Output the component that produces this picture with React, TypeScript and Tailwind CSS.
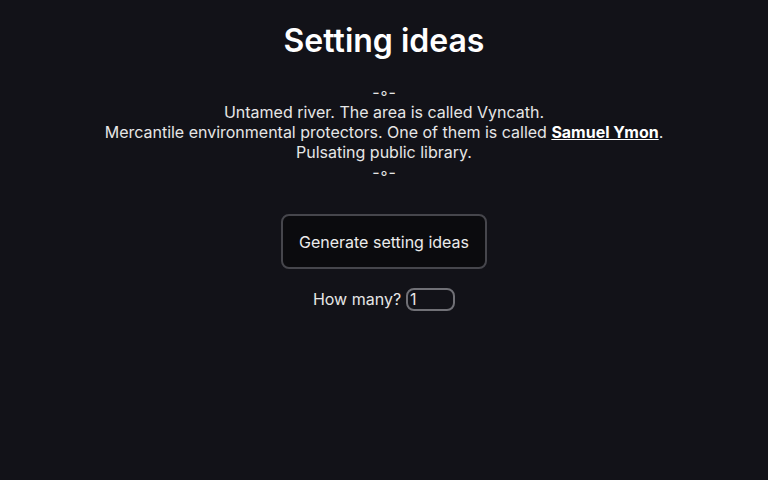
export default function App() {
  return (
    <div
      className="min-h-[480px] w-full bg-[#121218] text-[#e6e6e6] flex flex-col items-center pt-[21px]"
      style={{ fontFamily: 'Inter, "Noto Sans", sans-serif' }}
    >
      <h1 className="text-[32px] leading-[40px] font-semibold text-white">Setting ideas</h1>

      <div className="mt-[21px] text-base leading-5 text-center tracking-[-0.01px]">
        <p>-◦-</p>
        <p>Untamed river. The area is called Vyncath.</p>
        <p>
          Mercantile environmental protectors. One of them is called{' '}
          <a href="#" className="font-bold underline text-white">Samuel Ymon</a>.
        </p>
        <p>Pulsating public library.</p>
        <p>-◦-</p>
      </div>

      <button className="mt-8 h-[55px] w-[206px] rounded-lg border-2 border-[#46464c] bg-[#0b0b0e] text-base text-[#ececec]">
        Generate setting ideas
      </button>

      <div className="mt-[18px] flex items-center gap-[5px] text-base">
        <span>How many?</span>
        <input
          type="number"
          defaultValue={1}
          className="h-[23px] w-[49px] rounded-lg border-2 border-[#707076] bg-transparent px-[2px] text-base text-[#e6e6e6] outline-none [appearance:textfield]"
        />
      </div>
    </div>
  );
}
